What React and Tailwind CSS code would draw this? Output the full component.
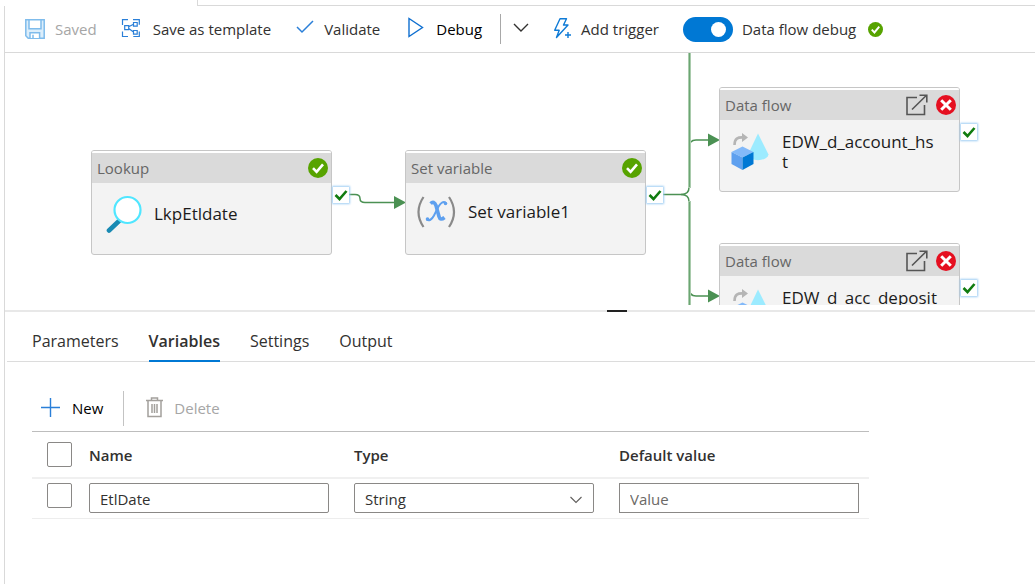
import React, { useState } from "react";

const tabs = ["Parameters", "Variables", "Settings", "Output"];

const activities = [
  { id: "lookup", type: "Lookup", name: "LkpEtldate", icon: "lookup", ok: true, pos: "left-[86px] top-[97px]" },
  { id: "setvar", type: "Set variable", name: "Set variable1", icon: "variable", ok: true, pos: "left-[400px] top-[97px]" },
  { id: "account", type: "Data flow", name: "EDW_d_account_hst", icon: "flow", ok: false, pos: "left-[714px] top-[34px]" },
  { id: "deposit", type: "Data flow", name: "EDW_d_acc_deposit", icon: "flow", ok: false, pos: "left-[714px] top-[190px]" },
];

function SaveIcon() {
  return (
    <svg width="20" height="20" viewBox="0 0 20 20" fill="none" stroke="#7fbcec" strokeWidth="1.5">
      <path d="M.8.8h18.4v18.4H3.2L.8 16.8z" fill="#dceefb" />
      <path d="M4 .8h12v9H4z" fill="#fff" />
      <path d="M5 19v-5.200h9.600V19M8 19v-3.200" fill="#fff" />
    </svg>
  );
}

function TemplateIcon() {
  return (
    <svg width="20" height="20" viewBox="0 0 20 20" fill="none" stroke="#2a7fd8" strokeWidth="1.2">
      <path d="M7 .7H1.500V6M1.500 12.500v5H7M12 .7h6.300v5M18.300 12.500v5h-6" />
      <path d="M3.700 6.700h4v4h-4zM12.500 3.500h3.700v3.700h-3.700zM12.500 11.500h3.700v3.700h-3.700zM7.700 7.800l4.800-2.600M7.700 9.500l4.800 3.500" />
    </svg>
  );
}

function TriggerIcon() {
  return (
    <svg width="20" height="22" viewBox="0 0 20 22" fill="none" stroke="#0f7bd6" strokeWidth="1.4">
      <path d="M7 .8h6.500L10.500 7H15L3.500 19.500l2.700-7.200H1.700z" strokeLinejoin="round" />
      <path d="M15 14v6M12 17h6" />
    </svg>
  );
}

function StatusIcon({ ok, size = 20 }) {
  return (
    <svg width={size} height={size} viewBox="0 0 20 20" fill="none" stroke="#fff">
      <circle cx="10" cy="10" r="10" fill={ok ? "#57a300" : "#e50f20"} stroke="none" />
      {ok ? (
        <path d="M5 10.200l3.600 3.700L15 6.300" strokeWidth="2.600" />
      ) : (
        <path d="M5.200 5.200l9.600 9.600M14.800 5.200l-9.600 9.600" strokeWidth="3" />
      )}
    </svg>
  );
}

function OpenIcon() {
  return (
    <svg width="22" height="22" viewBox="0 0 22 22" fill="none" stroke="#555" strokeWidth="1.600">
      <path d="M11 3.500H1v17h17.500V11M6 15.500L20.500 1.200M13.500 1.200h7.300v7.300" />
    </svg>
  );
}

function ActivityIcon({ icon }) {
  if (icon === "lookup") {
    return (
      <svg width="36" height="38" viewBox="0 0 36 38" className="shrink-0">
        <path d="M3 35.500L13 26" stroke="#198ab3" strokeWidth="4.600" strokeLinecap="round" />
        <circle cx="21.500" cy="15" r="13" fill="#fff" stroke="#50e6ff" strokeWidth="2.200" />
      </svg>
    );
  }
  if (icon === "variable") {
    return (
      <svg width="40" height="34" viewBox="0 0 40 34" fill="none" className="shrink-0">
        <path d="M7.500 2Q-2.500 17 7.500 32M33 2q10 15 0 30" stroke="#8a8a8a" strokeWidth="2.200" />
        <path d="M14.500 8.500q3.500-3 5.500 2l3 11q1.200 4.500 5.500 1" stroke="#5ea0ef" strokeWidth="3.600" />
        <path d="M30 8q-3.500-3-7.500 3.500l-4.500 9q-3.500 6.500-7.500 4" stroke="#5ea0ef" strokeWidth="2" />
        <circle cx="29.500" cy="8.500" r="1.800" fill="#5ea0ef" />
        <circle cx="11.500" cy="24" r="1.800" fill="#5ea0ef" />
      </svg>
    );
  }
  return (
    <svg width="40" height="38" viewBox="0 0 40 38" className="shrink-0">
      <path d="M28 1.500L38.500 22.500C37.500 30 18.500 30 18 22.500z" fill="#9cebff" />
      <path d="M4.500 13C4.500 6.500 7.500 5 14 5.500" fill="none" stroke="#b5b5b5" strokeWidth="2.600" />
      <path d="M12 1l6 4.500L12 10z" fill="#b5b5b5" />
      <path d="M1.500 20l11-5.500 11 5.500-11 5.500z" fill="#83b9f9" />
      <path d="M1.500 20l11 5.500V38l-11-6z" fill="#5ea0ef" />
      <path d="M23.500 20l-11 5.500V38l11-6z" fill="#0078d4" />
    </svg>
  );
}

const bodyStyles = {
  lookup: "items-center gap-3 pl-[14px]",
  variable: "items-center gap-3 pl-[10px]",
  flow: "gap-3 pl-[10px]",
};

function Activity({ item }) {
  return (
    <div className={`absolute w-[241px] ${item.pos}`}>
      <div className="h-[105px] overflow-hidden rounded-[3px] border border-[#c6c6c6] bg-[#f3f3f3]">
        <div className="flex h-8 items-center border-t-2 border-white bg-[#dadada] pl-[5px] pr-[3px] text-[15px] text-[#666]">
          <span className="flex-1">{item.type}</span>
          {!item.ok && (
            <button aria-label={`Open ${item.name}`} className="mr-2">
              <OpenIcon />
            </button>
          )}
          <StatusIcon ok={item.ok} />
        </div>
        <div className={`flex pt-3 text-[17px] leading-5 text-[#1b1b1b] ${bodyStyles[item.icon]}`}>
          <ActivityIcon icon={item.icon} />
          <span className={item.icon === "flow" ? "w-[156px] break-all" : ""}>{item.name}</span>
        </div>
      </div>
      <span className="absolute left-[242px] top-[37px] flex size-4 items-center justify-center bg-white shadow-[0_0_2px_1px_#9fcdf3]">
        <svg width="14" height="14" viewBox="0 0 14 14" fill="none" stroke="#107c10" strokeWidth="2.600">
          <path d="M1.500 7l4 4L12.500 3" />
        </svg>
      </span>
    </div>
  );
}

function Connectors() {
  return (
    <svg width="1030" height="252" className="absolute left-0 top-0" fill="none" stroke="#4b9153" strokeWidth="1.500">
      <path d="M342 141.500h8q5 0 5 4t5 4h30" />
      <path d="M656 141.500h20q8 0 8-7V95q0-8 7-8h12" />
      <path d="M676 141.500q8 0 8 7V235q0 8 7 8h12" />
      <path d="M684.500 0v135M684.500 148v104" strokeWidth="3" stroke="#a9cbac" />
      <path d="M684.500 0v134M684.500 149v103" strokeWidth="1" stroke="#6ba672" />
      <path d="M389 143l12 6.500-12 6.500zM703 80.500l12 6.500-12 6.500zM703 236.500l12 6.500-12 6.500z" fill="#4b9153" stroke="none" />
    </svg>
  );
}

export default function App() {
  const [tab, setTab] = useState("Variables");
  const [debug, setDebug] = useState(true);

  return (
    <div className="min-h-screen bg-white pl-1 font-['Open_Sans','Noto_Sans',sans-serif] text-[15px] text-[#323130]">
      <div className="flex h-[6px]">
        <div className="w-[193px]" />
        <div className="flex-1 border-b border-l border-[#d9d9d9]" />
      </div>

      <div className="min-h-[578px] border-l border-[#d9d9d9]">
        {/* Pipeline toolbar */}
        <div className="flex h-[47px] items-center whitespace-nowrap border-b border-[#d9d9d9] pl-5">
          <button disabled className="flex items-center gap-[10px] text-[#a6a6a6]">
            <SaveIcon />
            Saved
          </button>
          <button className="ml-6 flex items-center gap-3">
            <TemplateIcon />
            Save as template
          </button>
          <button className="ml-[25px] flex items-center gap-[10px]">
            <svg width="18" height="18" viewBox="0 0 18 18" fill="none" stroke="#2a7fd8" strokeWidth="1.500">
              <path d="M1 7l5 5L17 1" />
            </svg>
            Validate
          </button>
          <button className="ml-7 flex items-center gap-3 text-black">
            <svg width="16" height="24" viewBox="0 0 16 24" fill="none" stroke="#0f6fd0" strokeWidth="1.400">
              <path d="M1 1.500v18L14.500 10.500z" />
            </svg>
            Debug
          </button>
          <div className="ml-[18px] h-[30px] w-px bg-[#a8a8a8]" />
          <button aria-label="Debug options" className="ml-3">
            <svg width="16" height="12" viewBox="0 0 16 12" fill="none" stroke="#323130" strokeWidth="1.400">
              <path d="M1 1l7 7 7-7" />
            </svg>
          </button>
          <button className="ml-6 flex items-center gap-2">
            <TriggerIcon />
            Add trigger
          </button>
          <button
            role="switch"
            aria-checked={debug}
            aria-labelledby="debug-label"
            onClick={() => setDebug(!debug)}
            className={`ml-6 flex h-[25px] w-[50px] items-center rounded-full px-[7px] ${debug ? "justify-end bg-[#0078d4]" : "justify-start bg-[#8a8886]"}`}
          >
            <span className="size-[15px] rounded-full bg-white" />
          </button>
          <span id="debug-label" className="ml-[9px] mr-3">Data flow debug</span>
          <StatusIcon ok size={15} />
        </div>

        {/* Canvas */}
        <div className="relative h-[252px] overflow-hidden">
          <Connectors />
          {activities.map((item) => (
            <Activity key={item.id} item={item} />
          ))}
        </div>

        <div className="mt-[5px] flex h-[2px] bg-[#e8e8e8]">
          <div className="ml-[602px] w-5 bg-[#222]" />
        </div>

        {/* Properties */}
        <div role="tablist" className="ml-[2px] flex h-[50px] gap-[30px] border-b border-[#dcdcdc] pl-[25px] text-base">
          {tabs.map((t) => (
            <button
              key={t}
              role="tab"
              aria-selected={tab === t}
              onClick={() => setTab(t)}
              className={`-mb-px border-b-2 pt-3 pb-[2px] ${tab === t ? "border-[#0078d4] font-semibold" : "border-transparent"}`}
            >
              {t}
            </button>
          ))}
        </div>

        <div className="ml-[27px] mr-4 max-w-[837px] pt-[29px]">
          <div className="flex h-[35px] items-center">
            <button className="flex items-center gap-[11px] pl-[9px] text-black">
              <svg width="20" height="22" viewBox="0 0 20 22" stroke="#2a7fd8" strokeWidth="1.400">
                <path d="M9.500 0v19M0 9.500h19" />
              </svg>
              New
            </button>
            <div className="ml-5 h-full w-px bg-[#c3c3c3]" />
            <button disabled className="ml-[22px] flex items-center gap-[11px] text-[#a6a6a6]">
              <svg width="17" height="24" viewBox="0 0 17 24" fill="none" stroke="#a3a09c" strokeWidth="1.500">
                <path d="M0 3.500h17M5.500 3V1h6v2M2 3.500v16h13v-16M6 7v9M8.500 7v9M11 7v9" />
              </svg>
              Delete
            </button>
          </div>

          <table className="mt-[5px] w-full table-fixed border-t border-[#bdbdbd] text-left">
            <thead>
              <tr className="h-[46px] border-b-2 border-[#f0f0f0]">
                <th className="w-[57px] pl-[15px] align-middle">
                  <input type="checkbox" aria-label="Select all" className="block size-[25px] appearance-none rounded-[2px] border border-[#8a8886]" />
                </th>
                <th className="w-[265px] pt-[2px] font-semibold">Name</th>
                <th className="w-[265px] pt-[2px] font-semibold">Type</th>
                <th className="pt-[2px] font-semibold">Default value</th>
              </tr>
            </thead>
            <tbody>
              <tr className="h-[41px] border-b border-[#ededed]">
                <td className="pb-[6px] pl-[15px]">
                  <input type="checkbox" aria-label="Select EtlDate" className="block size-[25px] appearance-none rounded-[2px] border border-[#8a8886]" />
                </td>
                <td>
                  <input aria-label="Name" defaultValue="EtlDate" className="block h-[30px] w-60 rounded-[2px] border border-[#8a8886] px-[10px] pt-[2px]" />
                </td>
                <td>
                  <div className="relative w-60">
                    <select aria-label="Type" className="block h-[30px] w-full appearance-none rounded-[2px] border border-[#8a8886] px-[10px] pt-[2px]">
                      <option>String</option>
                      <option>Boolean</option>
                      <option>Array</option>
                    </select>
                    <svg width="12" height="8" viewBox="0 0 12 8" fill="none" stroke="#605e5c" strokeWidth="1.100" className="pointer-events-none absolute right-3 top-[13px]">
                      <path d="M.5 1L6 6.500 11.500 1" />
                    </svg>
                  </div>
                </td>
                <td>
                  <input aria-label="Default value" placeholder="Value" className="block h-[30px] w-60 border border-[#8a8886] px-[10px] pt-[2px] placeholder:text-[#6b6966]" />
                </td>
              </tr>
            </tbody>
          </table>
        </div>
      </div>
    </div>
  );
}
